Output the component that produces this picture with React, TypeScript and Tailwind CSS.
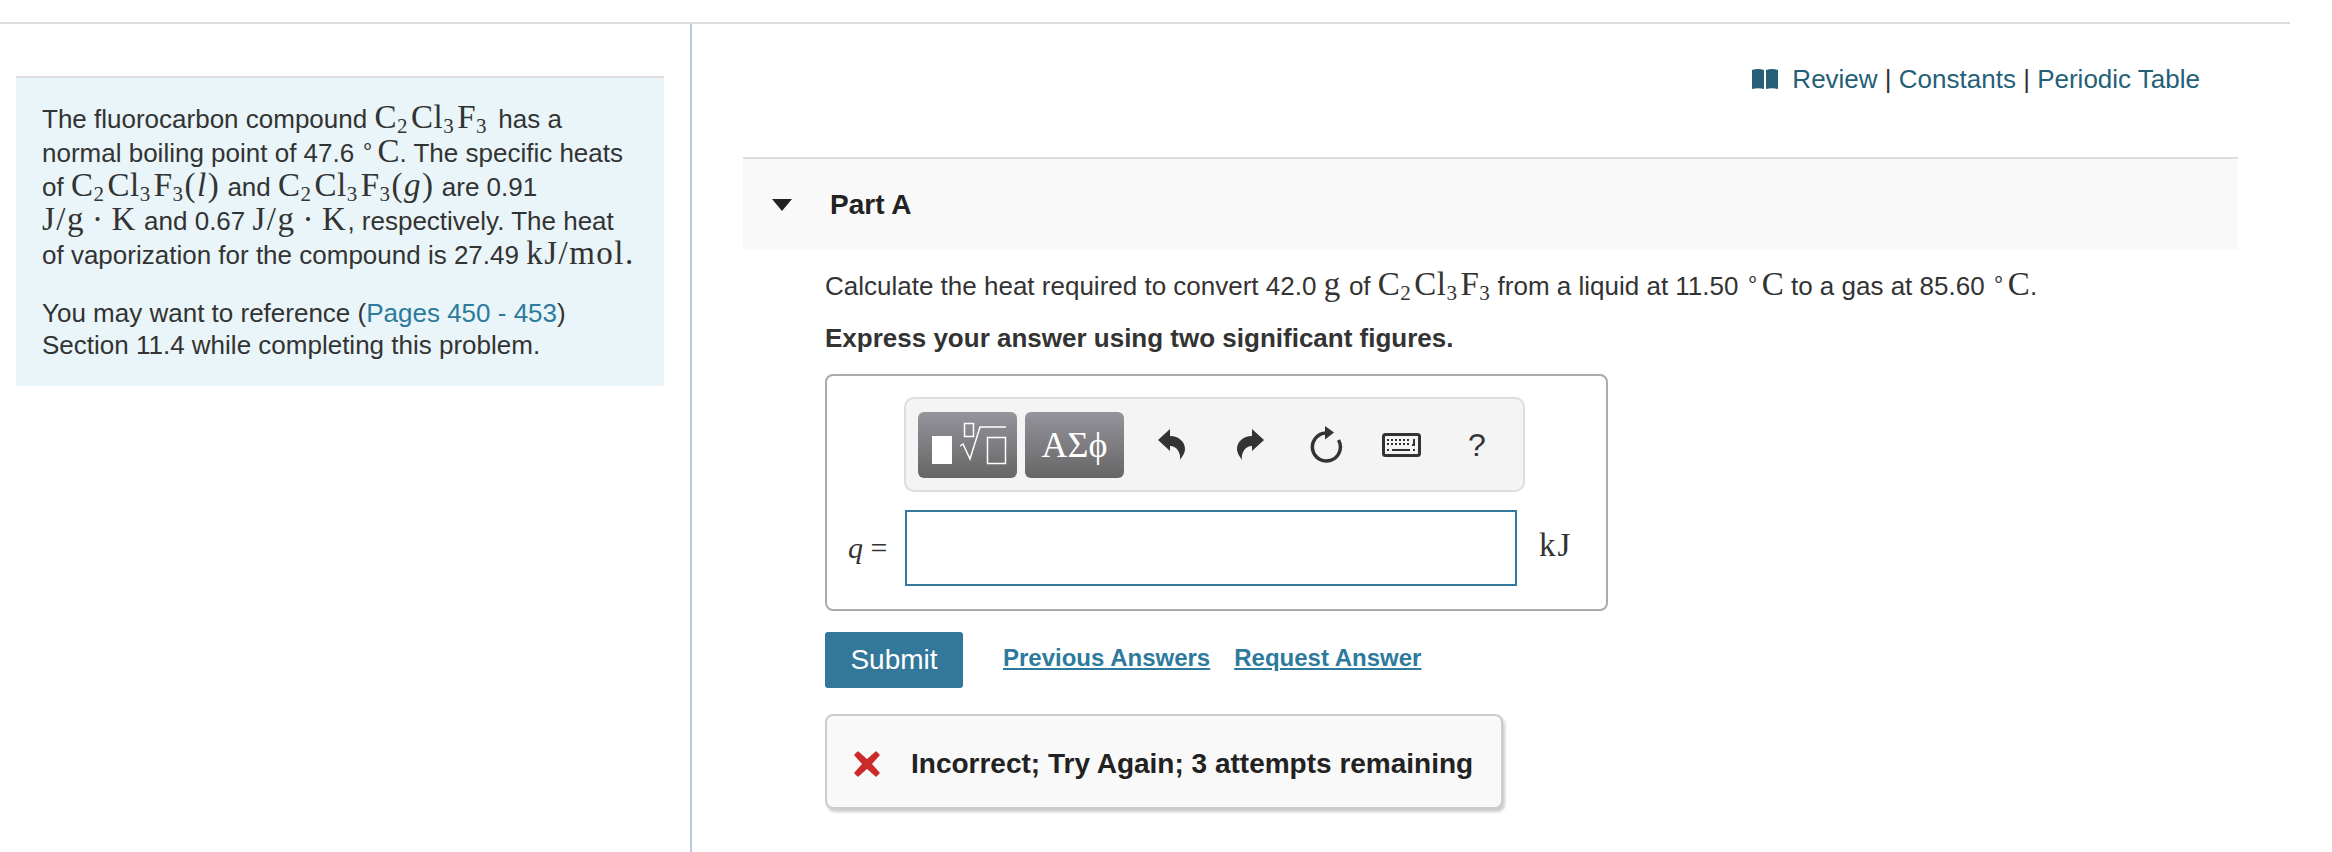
const serif = "font-['Liberation_Serif',serif]"

// C2Cl3F3 written the way the math renderer shows it
const Compound = () => (
   <span className={`${serif} text-[33px] leading-[20px] tracking-[0.5px]`}>
      C<sub className="text-[21px]">2</sub>
      <span className="ml-[3px]">Cl</span>
      <sub className="text-[21px]">3</sub>
      <span className="ml-[3px]">F</span>
      <sub className="text-[21px]">3</sub>
   </span>
)

const Math = ({ children }: { children: React.ReactNode }) => (
   <span className={`${serif} text-[33px] leading-[20px] tracking-[1.5px]`}>{children}</span>
)

const Degree = () => (
   <span className={`${serif} text-[33px] leading-[20px]`}>
      <sup className="text-[21px] mr-[3px]">∘</sup>C
   </span>
)

// J/g·K with the thin gaps round the dot
const Unit = () => (
   <Math>
      J/g<span className="mx-[7px]">·</span>K
   </Math>
)

const BookIcon = () => (
   <svg width="26" height="20" viewBox="0 0 26 20" className="shrink-0">
      <path d="M0 1c4-1.200 8-1.200 12 0v19c-4-1-8-1-12 0z" fill="#255f77" />
      <path d="M26 1c-4-1.200-8-1.200-12 0v19c4-1 8-1 12 0z" fill="#255f77" />
   </svg>
)

const UndoIcon = ({ flip }: { flip?: boolean }) => (
   <svg width="28" height="32" viewBox="0 0 28 32" className={flip ? "-scale-x-100" : ""}>
      <path d="M0 11 12 0v7c9 0 15 6 15 13 0 4-3 8-5 11 1-7-3-14-10-14v5z" fill="#333" />
   </svg>
)

const ResetIcon = () => (
   <svg width="34" height="38" viewBox="0 0 34 38">
      <path d="M16 7A14 14 0 1 0 28.500 14" fill="none" stroke="#333" strokeWidth="3.500" />
      <path d="M15 0l9 6.500-9 7z" fill="#333" />
   </svg>
)

const KeyboardIcon = () => (
   <svg width="39" height="24" viewBox="0 0 39 24">
      <rect x="1.500" y="1.500" width="36" height="21" rx="2" fill="#f4f4f4" stroke="#333" strokeWidth="3" />
      <path d="M5 7h24M5 11h24" stroke="#333" strokeWidth="2" strokeDasharray="2 2" />
      <path d="M32 6v6h-2M5 17h2M10 17h18M31 17h2" stroke="#333" strokeWidth="2" fill="none" />
   </svg>
)

const TemplateIcon = () => (
   <svg width="99" height="66" viewBox="0 0 99 66">
      <rect x="14" y="24" width="20" height="28" fill="#fff" />
      <rect x="46.500" y="11.500" width="9" height="13" fill="none" stroke="#fff" strokeWidth="1.500" />
      <path d="M42 34l3-2 7 15 10-32h26" fill="none" stroke="#fff" strokeWidth="1.500" />
      <rect x="69.500" y="25.500" width="18" height="26" fill="none" stroke="#fff" strokeWidth="1.500" />
   </svg>
)

const App = () => {
   return (
      <div className="w-[2332px] h-[852px] overflow-hidden bg-white text-[#333] text-[26px] leading-[34px] font-['Liberation_Sans',sans-serif]">
         <div className="h-[24px] w-[2290px] border-b-2 border-[#ddd]" />
         <div className="flex h-[828px]">
            {/* left intro panel */}
            <div className="w-[690px] pl-4 pr-[26px] pt-[52px]">
               <div className="bg-[#e9f5f8] border-t-2 border-[#ddd] pl-[26px] pr-2 pt-[24px] pb-[25px]">
                  <p>
                     The fluorocarbon compound <Compound /> <span className="ml-[4px]">has a</span>
                     <br />
                     normal boiling point of 47.6 <Degree />. The specific heats
                     <br />
                     of <Compound />
                     <Math><span className="ml-[1px]">(<i>l</i>)</span></Math> and <Compound />
                     <Math><span className="ml-[1px]">(<i>g</i>)</span></Math> are 0.91
                     <br />
                     <Unit /> and 0.67 <Unit />, respectively. The heat
                     <br />
                     of vaporization for the compound is 27.49 <Math>kJ/mol.</Math>
                  </p>
                  <p className="mt-[25px] leading-[32px]">
                     You may want to reference (<a className="text-[#2d7a9c]">Pages 450 - 453</a>)
                     <br />
                     Section 11.4 while completing this problem.
                  </p>
               </div>
            </div>

            {/* right part */}
            <div className="flex-1 border-l-2 border-[#b9c9e2] pl-[51px]">
               <div className="w-[1495px]">
                  <div className="flex justify-end items-center gap-[14px] h-[133px] pt-[30px] pb-[53px] pr-[38px] text-[#255f77]">
                     <BookIcon />
                     <div>
                        <a>Review</a> <span className="text-[#333]">|</span> <a>Constants</a>{" "}
                        <span className="text-[#333]">|</span> <a>Periodic Table</a>
                     </div>
                  </div>
                  <div className="h-[93px] bg-[#f9f9f9] border-t-2 border-[#ddd] flex items-center pl-[29px] font-bold text-[28px] text-[#222]">
                     <div className="w-0 h-0 border-x-[10px] border-x-transparent border-t-[12px] border-t-[#222]" />
                     <span className="ml-[38px]">Part A</span>
                  </div>
                  <div className="pl-[82px]">
                     <p className="mt-[19px]">
                        Calculate the heat required to convert 42.0 <Math>g</Math> of <Compound /> from a liquid at 11.50 <Degree /> to a gas at 85.60 <Degree />.
                     </p>
                     <p className="mt-[18px] font-bold">Express your answer using two significant figures.</p>

                     <div className="mt-[19px] w-[783px] h-[237px] border-2 border-[#aaa] rounded-lg pl-[77px] pt-[21px]">
                        <div className="w-[621px] h-[95px] bg-[#f4f4f4] border-2 border-[#ddd] rounded-[10px] flex items-center pl-3">
                           <div className="w-[99px] h-[66px] rounded-md bg-gradient-to-b from-[#96949c] to-[#666] overflow-hidden">
                              <TemplateIcon />
                           </div>
                           <div className={`ml-[8px] w-[99px] h-[66px] rounded-md bg-gradient-to-b from-[#96949c] to-[#666] flex items-center justify-center text-white text-[36px] ${serif}`}>
                              ΑΣϕ
                           </div>
                           <div className="ml-[34px]"><UndoIcon /></div>
                           <div className="ml-[50px]"><UndoIcon flip /></div>
                           <div className="ml-[46px]"><ResetIcon /></div>
                           <div className="ml-[38px]"><KeyboardIcon /></div>
                           <div className="ml-[47px] text-[32px] font-normal">?</div>
                        </div>
                        <div className="flex items-center mt-[18px] -ml-[56px]">
                           <span className={`${serif} text-[30px] w-[57px]`}><i>q</i> =</span>
                           <div className="w-[612px] h-[76px] border-2 border-[#337a9b] bg-white" />
                           <span className={`${serif} text-[33px] tracking-[2px] ml-[22px] -mt-[6px]`}>kJ</span>
                        </div>
                     </div>

                     <div className="flex items-center mt-[21px]">
                        <button className="w-[138px] h-[56px] bg-[#33789b] text-white text-[28px] rounded-[3px]">Submit</button>
                        <a className="ml-10 -mt-[4px] text-[24px] font-bold text-[#2d7a9c] underline">Previous Answers</a>
                        <a className="ml-6 -mt-[4px] text-[24px] font-bold text-[#2d7a9c] underline">Request Answer</a>
                     </div>

                     <div className="mt-[26px] w-[678px] h-[95px] bg-[#f9f9f9] border-2 border-[#ccc] rounded-lg shadow-[2px_3px_3px_#ccc] flex items-center pl-[27px] pt-[4px] font-bold text-[#222] text-[28px]">
                        <svg width="26" height="26" viewBox="0 0 26 26" className="shrink-0">
                           <path d="M1 4 4 1l9 8 9-8 3 3-8 9 8 9-3 3-9-8-9 8-3-3 8-9z" fill="#cc2b2b" stroke="#cc2b2b" strokeWidth="1.500" strokeLinejoin="round" />
                        </svg>
                        <span className="ml-[31px] mt-[1px]">Incorrect; Try Again; 3 attempts remaining</span>
                     </div>
                  </div>
               </div>
            </div>
         </div>
      </div>
   )
}

export default App
